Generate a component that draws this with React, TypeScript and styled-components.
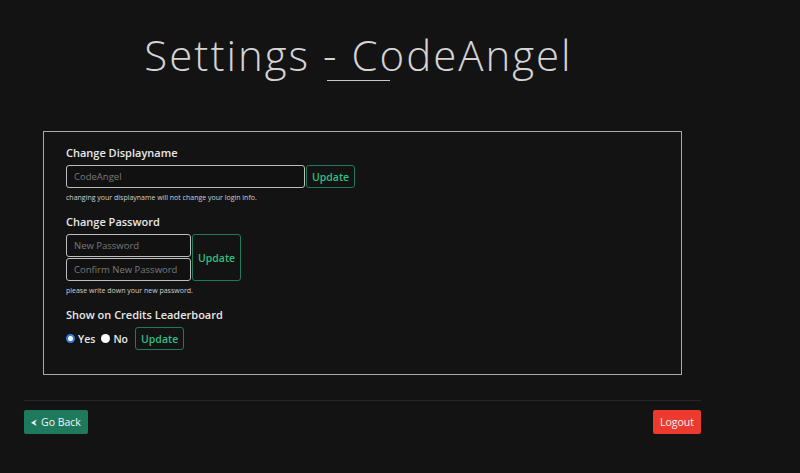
import { createGlobalStyle, styled } from "styled-components";

const GlobalStyle = createGlobalStyle`
    html, body {
        margin: 0;
        padding: 0;
        background-color: #131313;
    }
    body {
        font-family: 'Open Sans', 'Noto Sans', sans-serif;
        color: #e6e6e6;
    }
    * { box-sizing: border-box; }
`;

const Page = styled.div`
    width: 677px;
    margin-left: 24px;
    padding-top: 30px;
`;

const TitleBox = styled.div`
    display: flex;
    flex-direction: column;
    align-items: center;
    height: 101px;
    padding-right: 8px;
`;

const Title = styled.h1`
    margin: 0;
    font-family: 'Open Sans', sans-serif;
    font-weight: 300;
    font-size: 42px;
    line-height: 50px;
    letter-spacing: 2px;
    color: #d4d4d4;
`;

const TitleLine = styled.div`
    width: 63px;
    height: 1px;
    background-color: #c8c8c8;
`;

const Card = styled.div`
    margin: 0 19px;
    border: 1.5px solid #a8a8a8;
    padding: 13px 22px 17px 22px;
    height: 244px;
`;

const Label = styled.div`
    font-size: 11px;
    font-weight: 600;
    line-height: 16px;
    color: #e8e8e8;
    margin-bottom: 4px;
`;

const Row = styled.div`
    display: flex;
    align-items: stretch;
`;

const Input = styled.input<{ $w: number }>`
    width: ${({ $w }) => $w}px;
    height: 23px;
    background-color: #111;
    border: 1px solid #bdbdbd;
    border-radius: 3px;
    padding: 0 7px;
    font-family: 'Open Sans', sans-serif;
    font-size: 9.5px;
    color: #ddd;
    outline: none;

    &::placeholder {
        color: #7a7a7a;
    }
`;

const Stack = styled.div`
    display: flex;
    flex-direction: column;
    gap: 1px;
`;

const UpdateButton = styled.button<{ $h?: number }>`
    height: ${({ $h }) => ($h ? `${$h}px` : "23px")};
    padding: 0 5px;
    margin-left: 1px;
    background-color: transparent;
    border: 1px solid #1f7a5a;
    border-radius: 3px;
    color: #2fbf84;
    font-family: 'Open Sans', sans-serif;
    font-size: 10.5px;
    font-weight: 600;
`;

const Help = styled.div`
    font-size: 7px;
    line-height: 10px;
    color: #cfcfcf;
    margin: 5px 0 11px;
`;

const RadioRow = styled.div`
    display: flex;
    align-items: center;
    height: 23px;
`;

const RadioDot = styled.span<{ $on?: boolean }>`
    width: 9px;
    height: 9px;
    border-radius: 50%;
    background-color: #fff;
    border: ${({ $on }) => ($on ? "2.5px solid #2f7fe0" : "none")};
    margin-right: 3px;
`;

const RadioLabel = styled.span`
    font-size: 10.5px;
    font-weight: 600;
    color: #e8e8e8;
    margin-right: 6px;
`;

const Divider = styled.div`
    height: 1px;
    background-color: #262626;
    margin: 25px 0 9px;
`;

const Footer = styled.div`
    display: flex;
    justify-content: space-between;
`;

const ActionButton = styled.button<{ $kind: "back" | "logout" }>`
    display: flex;
    align-items: center;
    gap: 4px;
    height: 24px;
    padding: 0 7px;
    border: none;
    border-radius: 2px;
    background-color: ${({ $kind }) => ($kind === "back" ? "#1e7a5c" : "#ec3a2e")};
    color: #f4f4f4;
    font-family: 'Open Sans', sans-serif;
    font-size: 10.5px;
`;

const Arrow = styled.span`
    font-size: 8px;
`;

export default function App() {
    return (
        <>
            <GlobalStyle />
            <Page>
                <TitleBox>
                    <Title>Settings - CodeAngel</Title>
                    <TitleLine />
                </TitleBox>
                <Card>
                    <Label>Change Displayname</Label>
                    <Row>
                        <Input $w={239} placeholder="CodeAngel" />
                        <UpdateButton>Update</UpdateButton>
                    </Row>
                    <Help>changing your displayname will not change your login info.</Help>

                    <Label>Change Password</Label>
                    <Row>
                        <Stack>
                            <Input $w={125} type="password" placeholder="New Password" />
                            <Input $w={125} type="password" placeholder="Confirm New Password" />
                        </Stack>
                        <UpdateButton $h={47}>Update</UpdateButton>
                    </Row>
                    <Help>please write down your new password.</Help>

                    <Label>Show on Credits Leaderboard</Label>
                    <RadioRow>
                        <RadioDot $on />
                        <RadioLabel>Yes</RadioLabel>
                        <RadioDot />
                        <RadioLabel>No</RadioLabel>
                        <UpdateButton>Update</UpdateButton>
                    </RadioRow>
                </Card>
                <Divider />
                <Footer>
                    <ActionButton $kind="back"><Arrow>⮜</Arrow>Go Back</ActionButton>
                    <ActionButton $kind="logout">Logout</ActionButton>
                </Footer>
            </Page>
        </>
    );
}
